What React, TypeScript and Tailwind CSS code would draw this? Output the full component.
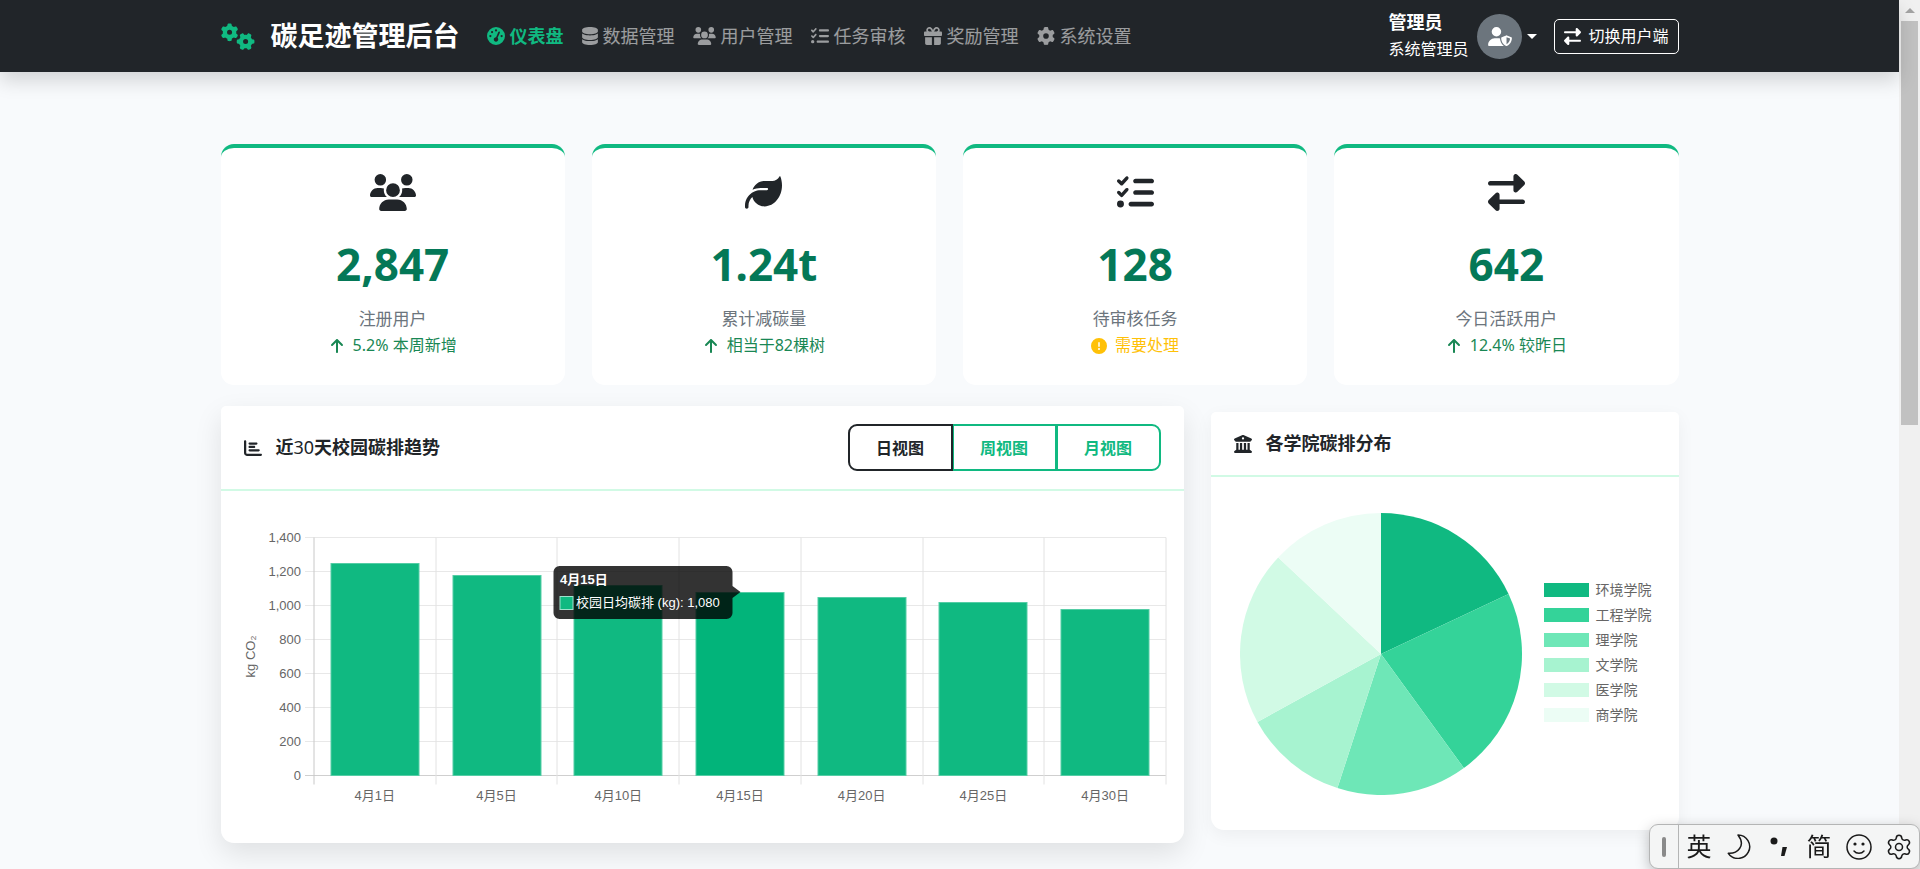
import type { ReactNode } from "react";
import { Settings } from "lucide-react";
import type { IconType } from "react-icons";
import {
  FaArrowUp,
  FaBuildingColumns,
  FaChartBar,
  FaCircleExclamation,
  FaDatabase,
  FaGaugeHigh,
  FaGear,
  FaGears,
  FaGift,
  FaLeaf,
  FaListCheck,
  FaRightLeft,
  FaUsers,
  FaUserShield,
} from "react-icons/fa6";

const navItems: { label: string; icon: IconType; size: string; active?: boolean }[] = [
  { label: "仪表盘", icon: FaGaugeHigh, size: "h-[18px] w-[18px]", active: true },
  { label: "数据管理", icon: FaDatabase, size: "h-[18px] w-[16px]" },
  { label: "用户管理", icon: FaUsers, size: "h-[18px] w-[23px]" },
  { label: "任务审核", icon: FaListCheck, size: "h-[18px] w-[18px]" },
  { label: "奖励管理", icon: FaGift, size: "h-[18px] w-[18px]" },
  { label: "系统设置", icon: FaGear, size: "h-[18px] w-[18px]" },
];

function Navbar() {
  return (
    <nav className="relative z-10 bg-[#212529] shadow-[0_9px_18px_rgba(0,0,0,0.15)]">
      <div className="mx-auto flex h-[72px] max-w-[1458px] items-center">
        <a href="#" className="flex items-center gap-4 text-[27px] font-bold text-white">
          <FaGears className="h-[27px] w-[34px] text-[#10b981]" />
          碳足迹管理后台
        </a>
        <ul className="ml-[27px] flex items-center gap-[18px] text-[18px]">
          {navItems.map(({ label, icon: Icon, size, active }) => (
            <li key={label}>
              <a
                href="#"
                className={
                  active
                    ? "flex items-center gap-[5px] font-bold text-[#10b981]"
                    : "flex items-center gap-[5px] text-white/55"
                }
              >
                <Icon className={size} />
                {label}
              </a>
            </li>
          ))}
        </ul>
        <div className="ml-auto flex items-center text-white">
          <div className="mr-[9px]">
            <div className="text-[18px] leading-[27px] font-bold">管理员</div>
            <div className="text-[16px] leading-[27px]">系统管理员</div>
          </div>
          <button type="button" aria-label="用户菜单" className="flex items-center gap-[5px]">
            <span className="flex size-[45px] items-center justify-center rounded-full bg-[#6c757d]">
              <FaUserShield className="h-[19px] w-[24px]" />
            </span>
            <svg viewBox="0 0 10 5" className="h-[5px] w-[10px]" fill="currentColor">
              <path d="M0 0h10L5 5z" />
            </svg>
          </button>
          <button
            type="button"
            className="ml-[17px] flex h-[35px] items-center gap-[7px] rounded-[5px] border border-white px-[9px] text-[16px]"
          >
            <FaRightLeft className="h-[17px] w-[17px]" />
            切换用户端
          </button>
        </div>
      </div>
    </nav>
  );
}

const stats: {
  icon: IconType;
  size: string;
  value: string;
  label: string;
  noteIcon: IconType;
  note: string;
  tone: string;
}[] = [
  { icon: FaUsers, size: "h-[37px] w-[46px]", value: "2,847", label: "注册用户", noteIcon: FaArrowUp, note: "5.2% 本周新增", tone: "text-[#198754]" },
  { icon: FaLeaf, size: "h-[37px] w-[37px]", value: "1.24t", label: "累计减碳量", noteIcon: FaArrowUp, note: "相当于82棵树", tone: "text-[#198754]" },
  { icon: FaListCheck, size: "h-[37px] w-[37px]", value: "128", label: "待审核任务", noteIcon: FaCircleExclamation, note: "需要处理", tone: "text-[#ffc107]" },
  { icon: FaRightLeft, size: "h-[37px] w-[37px]", value: "642", label: "今日活跃用户", noteIcon: FaArrowUp, note: "12.4% 较昨日", tone: "text-[#198754]" },
];

function StatCards() {
  return (
    <section className="grid grid-cols-4 gap-[27px]">
      {stats.map(({ icon: Icon, size, value, label, noteIcon: NoteIcon, note, tone }) => (
        <article
          key={label}
          className="flex flex-col items-center rounded-[13px] border-t-4 border-[#10b981] bg-white py-[26px]"
        >
          <Icon className={`${size} text-[#212529]`} />
          <div className="mt-[26px] text-[44px] leading-[54px] font-bold text-[#047857]">{value}</div>
          <div className="mt-[14px] text-[17px] leading-[27px] text-[#6c757d]">{label}</div>
          <div className={`flex items-center gap-2 text-[16px] leading-[27px] ${tone}`}>
            <NoteIcon className="h-4 w-4" />
            {note}
          </div>
        </article>
      ))}
    </section>
  );
}

const trend = [
  { day: "4月1日", value: 1250 },
  { day: "4月5日", value: 1180 },
  { day: "4月10日", value: 1120 },
  { day: "4月15日", value: 1080 },
  { day: "4月20日", value: 1050 },
  { day: "4月25日", value: 1020 },
  { day: "4月30日", value: 980 },
];

const plot = { left: 75, right: 927, top: 28.5, bottom: 266.5 };
const step = (plot.right - plot.left) / trend.length;
const yOf = (v: number) => plot.bottom - (v / 1400) * (plot.bottom - plot.top);
const hovered = 3;

function TrendChart() {
  return (
    <svg
      viewBox="0 0 927 316"
      role="img"
      aria-label="近30天校园碳排趋势"
      className="block w-full overflow-visible font-['Liberation_Sans','Noto_Sans_CJK_SC',sans-serif] text-[13px]"
    >
      {[0, 200, 400, 600, 800, 1000, 1200, 1400].map((v) => (
        <g key={v}>
          <line
            x1={plot.left - 9}
            x2={plot.right}
            y1={yOf(v)}
            y2={yOf(v)}
            stroke={v === 0 ? "#cfcfcf" : "#e8e8e8"}
            strokeWidth="1"
          />
          <text x="62" y={yOf(v) + 4} textAnchor="end" fill="#666">
            {v.toLocaleString("en-US")}
          </text>
        </g>
      ))}
      {Array.from({ length: trend.length + 1 }, (_, i) => (
        <line
          key={i}
          x1={Math.round(plot.left + i * step)}
          x2={Math.round(plot.left + i * step)}
          y1={plot.top}
          y2={plot.bottom + 9}
          stroke={i === 0 ? "#c8c8c8" : "#e2e2e2"}
        />
      ))}
      <text
        transform={`translate(16 ${(plot.top + plot.bottom) / 2}) rotate(-90)`}
        textAnchor="middle"
        fill="#666"
      >
        kg CO₂
      </text>
      {trend.map((d, i) => {
        const cx = plot.left + (i + 0.5) * step;
        const y = Math.round(yOf(d.value));
        return (
          <g key={d.day}>
            <rect
              x={Math.round(cx - 44)}
              y={y + 0.5}
              width="88"
              height={266 - y}
              fill={i === hovered ? "#02b47a" : "#10b981"}
              stroke="#54cda5"
            />
            <text x={cx} y="291" textAnchor="middle" fill="#666">
              {d.day}
            </text>
          </g>
        );
      })}
      <g>
        <path
          d="M320.500 57h167a6 6 0 0 1 6 6v14l8 6l-8 6v15a6 6 0 0 1-6 6h-167a6 6 0 0 1-6-6V63a6 6 0 0 1 6-6z"
          fill="#000"
          fillOpacity="0.8"
        />
        <text x="321" y="75" fontWeight="700" fill="#fff">
          4月15日
        </text>
        <rect x="321" y="87.500" width="13" height="13" fill="#10b981" stroke="#9fe3cd" />
        <text x="337" y="98" fill="#fff">
          校园日均碳排 (kg): 1,080
        </text>
      </g>
    </svg>
  );
}

const colleges = [
  { name: "环境学院", share: 18, color: "#10b981" },
  { name: "工程学院", share: 22, color: "#34d399" },
  { name: "理学院", share: 15, color: "#6ee7b7" },
  { name: "文学院", share: 12, color: "#a7f3d0" },
  { name: "医学院", share: 20, color: "#d1fae5" },
  { name: "商学院", share: 13, color: "#ecfdf5" },
];

function CollegePie() {
  const r = 141;
  const point = (percent: number) => {
    const a = (percent / 100) * Math.PI * 2;
    return `${r + r * Math.sin(a)} ${r - r * Math.cos(a)}`;
  };
  let start = 0;
  return (
    <svg viewBox="0 0 282 282" role="img" aria-label="各学院碳排分布" className="w-[282px] shrink">
      {colleges.map((c) => {
        const from = start;
        start += c.share;
        return <path key={c.name} d={`M${r} ${r}L${point(from)}A${r} ${r} 0 0 1 ${point(start)}Z`} fill={c.color} />;
      })}
    </svg>
  );
}

function PanelTitle({ icon: Icon, children }: { icon: IconType; children: ReactNode }) {
  return (
    <h2 className="flex items-center gap-[14px] text-[18px] leading-[27px] font-bold">
      <Icon className="h-[18px] w-[18px]" />
      <span>{children}</span>
    </h2>
  );
}

function Panels() {
  return (
    <section className="mt-[27px] grid grid-cols-3 items-start gap-[27px] text-[#212529]">
      <article className="col-span-2 -translate-y-1.5 rounded-t-[5px] rounded-b-[13px] bg-white shadow-[0_11px_28px_rgba(0,0,0,0.1)]">
        <header className="flex items-center justify-between border-b-2 border-[#d1fae5] px-[23px] py-[18px]">
          <PanelTitle icon={FaChartBar}>
            近<span className="font-normal">30</span>天校园碳排趋势
          </PanelTitle>
          <div className="flex -space-x-px text-[16px] font-bold">
            <button type="button" className="relative z-10 h-[47px] w-[105px] rounded-l-[9px] border-2 border-[#212529]">
              日视图
            </button>
            <button type="button" className="h-[47px] w-[105px] border-2 border-[#10b981] text-[#10b981]">
              周视图
            </button>
            <button type="button" className="h-[47px] w-[105px] rounded-r-[9px] border-2 border-[#10b981] text-[#10b981]">
              月视图
            </button>
          </div>
        </header>
        <div className="p-[18px]">
          <TrendChart />
        </div>
      </article>

      <article className="rounded-t-[5px] rounded-b-[13px] bg-white shadow-[0_5px_17px_rgba(0,0,0,0.05)]">
        <header className="border-b-2 border-[#d1fae5] px-[23px] py-[18px]">
          <PanelTitle icon={FaBuildingColumns}>各学院碳排分布</PanelTitle>
        </header>
        <div className="flex items-center gap-[22px] pt-[36px] pr-[18px] pb-[35px] pl-[29px]">
          <CollegePie />
          <ul className="pb-1 text-[14px] leading-[25px] whitespace-nowrap text-[#666]">
            {colleges.map((c) => (
              <li key={c.name} className="flex items-center gap-[7px]">
                <svg viewBox="0 0 45 14" className="h-[14px] w-[45px]">
                  <rect width="45" height="14" fill={c.color} />
                </svg>
                {c.name}
              </li>
            ))}
          </ul>
        </div>
      </article>
    </section>
  );
}

function ScrollTrack() {
  return (
    <div aria-hidden="true" className="flex w-[21px] shrink-0 flex-col items-center bg-[#f0f0f0]">
      <div className="flex h-[21px] items-center">
        <svg viewBox="0 0 10 5" className="h-[5px] w-[10px]">
          <path d="M5 0l5 5H0z" fill="#a3a3a3" />
        </svg>
      </div>
      <div className="h-[404px] w-[17px] bg-[#c1c1c1]" />
    </div>
  );
}

function InputMethodBar() {
  return (
    <div className="fixed right-0 bottom-0 z-20 flex h-[45px] items-center rounded-[9px] border border-[#b4b5b5] bg-[#f4f5f5] text-[25px] text-[#1a1a1a] shadow-[0_4px_14px_rgba(0,0,0,0.25)]">
      <div className="flex h-full w-[29px] items-center justify-center border-r border-[#b4b5b5]">
        <span className="h-5 w-1 rounded-full bg-[#8a8a8a]" />
      </div>
      <button type="button" className="flex w-10 justify-center">英</button>
      <button type="button" aria-label="半角" className="flex w-10 justify-center">
        <svg viewBox="0 0 25 25" className="size-[25px]" fill="none" stroke="currentColor" strokeWidth="1.500" strokeLinejoin="round">
          <path d="M11 1A11.700 11.700 0 1 1 1.300 19.300C10 20 19.500 12 11 1z" />
        </svg>
      </button>
      <button type="button" aria-label="中英文标点" className="flex w-10 justify-center">
        <svg viewBox="0 0 20 20" className="size-5" fill="currentColor">
          <circle cx="5" cy="4" r="3.500" />
          <path d="M13.500 10h4.500l-2.500 9h-3.500z" />
        </svg>
      </button>
      <button type="button" className="flex w-10 justify-center">简</button>
      <button type="button" aria-label="表情" className="flex w-10 justify-center">
        <svg viewBox="0 0 26 26" className="size-[26px]" fill="none" stroke="currentColor" strokeWidth="1.500" strokeLinecap="round">
          <circle cx="13" cy="13" r="12" />
          <path d="M8 17c2.500 3 7.500 3 10 0" />
          <circle cx="9" cy="10" r="1.600" fill="currentColor" stroke="none" />
          <circle cx="17" cy="10" r="1.600" fill="currentColor" stroke="none" />
        </svg>
      </button>
      <button type="button" aria-label="设置" className="flex w-10 justify-center">
        <Settings size={28} strokeWidth={1.3} />
      </button>
    </div>
  );
}

export default function App() {
  return (
    <div className="flex h-screen overflow-hidden bg-[#f8fafc] font-['Noto_Sans','Noto_Sans_CJK_SC',sans-serif]">
      <div className="min-w-0 flex-1">
        <Navbar />
        <main className="mx-auto max-w-[1458px] pt-[72px]">
          <StatCards />
          <Panels />
        </main>
      </div>
      <ScrollTrack />
      <InputMethodBar />
    </div>
  );
}
